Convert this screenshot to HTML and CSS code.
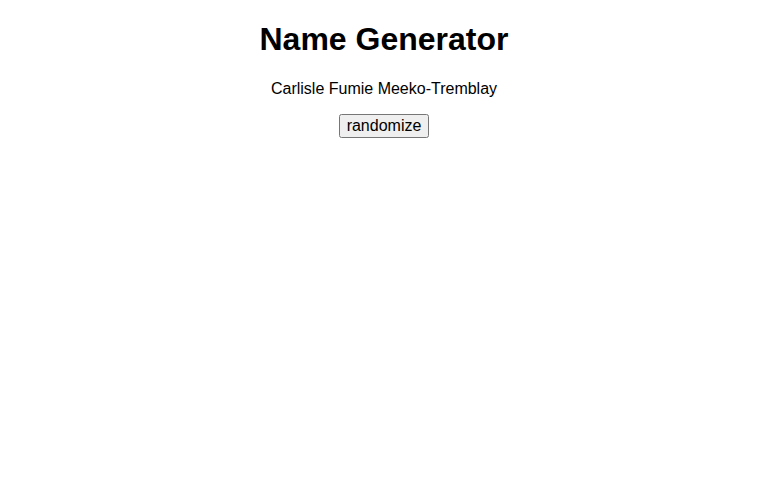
FILE: index.html
```html
<!DOCTYPE html>
<html lang="en">
<head>
    <meta charset="UTF-8">
    <meta name="viewport" content="width=device-width, initial-scale=1.0">
    <title>Name Generator</title>
    <link rel="stylesheet" href="styles.css">
</head>
<body>
    <div class="app">
        <h1>Name Generator</h1>
        <p id="name" class="name">Carlisle Fumie Meeko-Tremblay</p>
        <button id="randomizeBtn" class="randomize">randomize</button>
    </div>
</body>
</html>
```

FILE: styles.css
```css
body {
    font-family: "Liberation Sans", Arial, sans-serif;
    margin: 0;
    background-color: #fff;
    color: #000;
}
.app {
    text-align: center;
}
.name {
    font-size: 16px;
}
.randomize {
    font-family: "Liberation Sans", Arial, sans-serif;
    font-size: 16px;
}
```
